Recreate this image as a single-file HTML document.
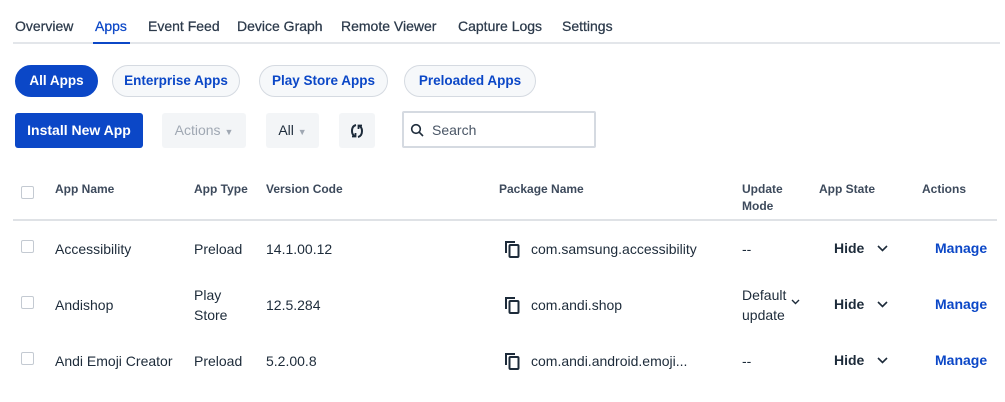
<!DOCTYPE html>
<html><head><style>
*{margin:0;padding:0;box-sizing:border-box}
body{width:1005px;height:402px;background:#fff;font-family:"Liberation Sans",sans-serif;color:#1d2b3a;position:relative;overflow:hidden}
.a{position:absolute;white-space:nowrap}
.tab{font-size:14px;color:#2c3a4b;top:18px;-webkit-text-stroke:0.25px #2c3a4b}
.pill{position:absolute;top:65px;height:32px;border:1px solid #d5dae1;border-radius:16px;background:#f6f8fa;color:#0b47c7;font-size:13.5px;font-weight:bold;text-align:center;line-height:30px}
.btn{position:absolute;top:113px;height:35px;border-radius:3px;background:#f3f5f7;font-size:14px;text-align:center;line-height:35px}
.th{font-size:12px;font-weight:bold;color:#3d4a5c;line-height:17px}
.td{font-size:14px;color:#1d2b3a;line-height:20px}
.cb{position:absolute;left:21px;width:13px;height:13px;border:1px solid #c4cad2;border-radius:2px;background:#fff}
.hide{font-size:14px;font-weight:bold}
.man{font-size:14px;font-weight:bold;color:#0b47c7}
</style></head><body>
<div class="a tab" style="left:15px">Overview</div>
<div class="a tab" style="left:95px;color:#0b47c7;-webkit-text-stroke:0.25px #0b47c7">Apps</div>
<div class="a tab" style="left:148px">Event Feed</div>
<div class="a tab" style="left:237px">Device Graph</div>
<div class="a tab" style="left:341px">Remote Viewer</div>
<div class="a tab" style="left:458px">Capture Logs</div>
<div class="a tab" style="left:562px">Settings</div>
<div class="a" style="left:13px;top:42px;width:987px;height:2px;background:#e3e6ea"></div>
<div class="a" style="left:93px;top:42px;width:37px;height:2px;background:#0b47c7"></div>

<div class="pill" style="left:15px;width:83px;background:#0b47c7;border-color:#0b47c7;color:#fff">All Apps</div>
<div class="pill" style="left:112px;width:128px">Enterprise Apps</div>
<div class="pill" style="left:259px;width:129px">Play Store Apps</div>
<div class="pill" style="left:404px;width:132px">Preloaded Apps</div>

<div class="btn" style="left:15px;width:128px;background:#0b47c7;color:#fff;font-weight:bold">Install New App</div>
<div class="btn" style="left:162px;width:84px;color:#a0a8b3">Actions <span style="font-size:9px">▼</span></div>
<div class="btn" style="left:266px;width:53px;color:#1d2b3a">All <span style="font-size:9px;color:#a0a8b3">▼</span></div>
<div class="btn" style="left:339px;width:36px">
<svg width="18" height="18" viewBox="0 0 18 18" style="margin-top:9px" fill="none" stroke="#1d2b3a" stroke-width="2"><path d="M8 3 Q4 4 4 9 Q4 12.5 6.5 14"/><path d="M10 15 Q14 14 14 9 Q14 5.5 11.5 4"/><path d="M4 14.5 L7.5 14.5 L7.5 11" stroke-width="1.8"/><path d="M14 3.5 L10.5 3.5 L10.5 7" stroke-width="1.8"/></svg></div>
<div class="a" style="left:402px;top:111px;width:194px;height:37px;border:2px solid #d5dae1;border-radius:2px;background:#fff"></div>
<svg class="a" style="left:410px;top:123px" width="14" height="14" viewBox="0 0 14 14" fill="none" stroke="#1d2b3a" stroke-width="1.6"><circle cx="6" cy="6" r="4.3"/><path d="M9.2 9.2 L13 13"/></svg>
<div class="a" style="left:432px;top:122px;font-size:14px;color:#4a5666">Search</div>

<div class="cb" style="top:186px"></div>
<div class="a th" style="left:55px;top:181px">App Name</div>
<div class="a th" style="left:194px;top:181px">App Type</div>
<div class="a th" style="left:266px;top:181px">Version Code</div>
<div class="a th" style="left:499px;top:181px">Package Name</div>
<div class="a th" style="left:742px;top:181px">Update<br>Mode</div>
<div class="a th" style="left:819px;top:181px">App State</div>
<div class="a th" style="left:922px;top:181px">Actions</div>
<div class="a" style="left:13px;top:219px;width:984px;height:2px;background:#dfe2e6"></div>

<div class="cb" style="top:240px"></div>
<div class="a td" style="left:55px;top:239px">Accessibility</div>
<div class="a td" style="left:194px;top:239px">Preload</div>
<div class="a td" style="left:266px;top:239px">14.1.00.12</div>
<div class="a td" style="left:531px;top:239px">com.samsung.accessibility</div>
<div class="a td" style="left:742px;top:239px">--</div>

<div class="cb" style="top:296px"></div>
<div class="a td" style="left:55px;top:295px">Andishop</div>
<div class="a td" style="left:194px;top:285px">Play<br>Store</div>
<div class="a td" style="left:266px;top:295px">12.5.284</div>
<div class="a td" style="left:531px;top:295px">com.andi.shop</div>
<div class="a td" style="left:742px;top:285px">Default<br>update</div>
<svg class="a" style="left:791px;top:299px" width="9" height="6" viewBox="0 0 9 6" fill="none" stroke="#1d2b3a" stroke-width="1.4"><path d="M1 1 L4.5 4.5 L8 1"/></svg>

<div class="cb" style="top:352px"></div>
<div class="a td" style="left:55px;top:351px">Andi Emoji Creator</div>
<div class="a td" style="left:194px;top:351px">Preload</div>
<div class="a td" style="left:266px;top:351px">5.2.00.8</div>
<div class="a td" style="left:531px;top:351px">com.andi.android.emoji...</div>
<div class="a td" style="left:742px;top:351px">--</div>

<svg class="a" style="left:504px;top:240px" width="16" height="18" viewBox="0 0 16 18" fill="none" stroke="#1d2b3a" stroke-width="2"><path d="M2 13 V2 H11"/><rect x="5.5" y="5" width="9" height="12" rx="1"/></svg>
<svg class="a" style="left:504px;top:296px" width="16" height="18" viewBox="0 0 16 18" fill="none" stroke="#1d2b3a" stroke-width="2"><path d="M2 13 V2 H11"/><rect x="5.5" y="5" width="9" height="12" rx="1"/></svg>
<svg class="a" style="left:504px;top:352px" width="16" height="18" viewBox="0 0 16 18" fill="none" stroke="#1d2b3a" stroke-width="2"><path d="M2 13 V2 H11"/><rect x="5.5" y="5" width="9" height="12" rx="1"/></svg>

<div class="a hide" style="left:834px;top:240px">Hide</div>
<div class="a hide" style="left:834px;top:296px">Hide</div>
<div class="a hide" style="left:834px;top:352px">Hide</div>
<svg class="a" style="left:877px;top:245px" width="11" height="7" viewBox="0 0 11 7" fill="none" stroke="#1d2b3a" stroke-width="1.6"><path d="M1 1 L5.5 5.5 L10 1"/></svg>
<svg class="a" style="left:877px;top:301px" width="11" height="7" viewBox="0 0 11 7" fill="none" stroke="#1d2b3a" stroke-width="1.6"><path d="M1 1 L5.5 5.5 L10 1"/></svg>
<svg class="a" style="left:877px;top:357px" width="11" height="7" viewBox="0 0 11 7" fill="none" stroke="#1d2b3a" stroke-width="1.6"><path d="M1 1 L5.5 5.5 L10 1"/></svg>
<div class="a man" style="left:935px;top:240px">Manage</div>
<div class="a man" style="left:935px;top:296px">Manage</div>
<div class="a man" style="left:935px;top:352px">Manage</div>
</body></html>
